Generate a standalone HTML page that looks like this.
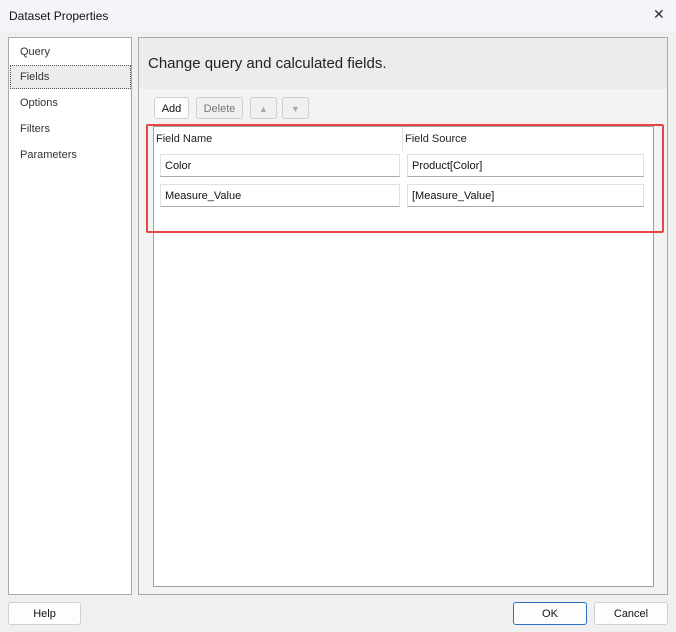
<!DOCTYPE html>
<html><head><style>
*{box-sizing:border-box;margin:0;padding:0}
body{width:676px;height:632px;background:#f0f0f0;font-family:"Liberation Sans",sans-serif;font-size:11px;color:#222;position:relative;overflow:hidden}
.abs{position:absolute}
.title{left:0;top:0;width:676px;height:32px;background:#f3f5f9;}
.btn{position:absolute;background:#fdfdfd;border:1px solid #d0d0d0;border-radius:3px;text-align:center;font-size:11px;line-height:22px;color:#111}
.fld{position:absolute;background:#fff;border:1px solid #e0e0e0;border-bottom:1px solid #a8a8a8;height:23px;line-height:23px;padding-left:4px;font-size:11px;color:#111}
.nav div{position:absolute;left:11px;font-size:11px;color:#333}
</style></head><body>
<div class="abs title"></div>
<div class="abs" style="left:9px;top:9px;font-size:12px;color:#111">Dataset Properties</div>
<div class="abs" style="left:653px;top:6px;font-size:14px;color:#333">✕</div>
<div class="abs nav" style="left:8px;top:37px;width:124px;height:558px;background:#fff;border:1px solid #a9a9a9">
<div style="top:8px">Query</div>
<div style="top:27px;left:1px;width:121px;height:24px;background:#ececec;border:1px dotted #555"></div>
<div style="top:33px">Fields</div>
<div style="top:59px">Options</div>
<div style="top:85px">Filters</div>
<div style="top:111px">Parameters</div>
</div>
<div class="abs" style="left:138px;top:37px;width:530px;height:558px;background:#f3f3f3;border:1px solid #a9a9a9">
<div class="abs" style="left:0;top:0;width:528px;height:51px;background:#ececec"></div>
<div class="abs" style="left:9px;top:17px;font-size:15px;color:#222">Change query and calculated fields.</div>
</div>
<div class="btn" style="left:154px;top:97px;width:35px;height:22px">Add</div>
<div class="btn" style="left:196px;top:97px;width:47px;height:22px;background:#f0f0f0;color:#777">Delete</div>
<div class="btn" style="left:250px;top:97px;width:27px;height:22px;background:#f0f0f0;color:#aaa;font-size:9px">▲</div>
<div class="btn" style="left:282px;top:97px;width:27px;height:22px;background:#f0f0f0;color:#aaa;font-size:9px">▼</div>
<div class="abs" style="left:153px;top:126px;width:501px;height:461px;background:#fff;border:1px solid #a0a0a0"></div>
<div class="abs" style="left:156px;top:133px;color:#222">Field Name</div>
<div class="abs" style="left:405px;top:133px;color:#222">Field Source</div>
<div class="abs" style="left:402px;top:127px;width:1px;height:24px;background:#e4e4e4"></div>
<div class="fld" style="left:160px;top:154px;width:240px">Color</div>
<div class="fld" style="left:160px;top:184px;width:240px">Measure_Value</div>
<div class="fld" style="left:407px;top:154px;width:237px">Product[Color]</div>
<div class="fld" style="left:407px;top:184px;width:237px">[Measure_Value]</div>
<div class="abs" style="left:146px;top:124px;width:518px;height:109px;border:2px solid #e84545;border-radius:2px"></div>
<div class="btn" style="left:8px;top:602px;width:73px;height:23px">Help</div>
<div class="btn" style="left:513px;top:602px;width:74px;height:23px;border:1px solid #2a6fc4">OK</div>
<div class="btn" style="left:594px;top:602px;width:74px;height:23px">Cancel</div>
</body></html>
